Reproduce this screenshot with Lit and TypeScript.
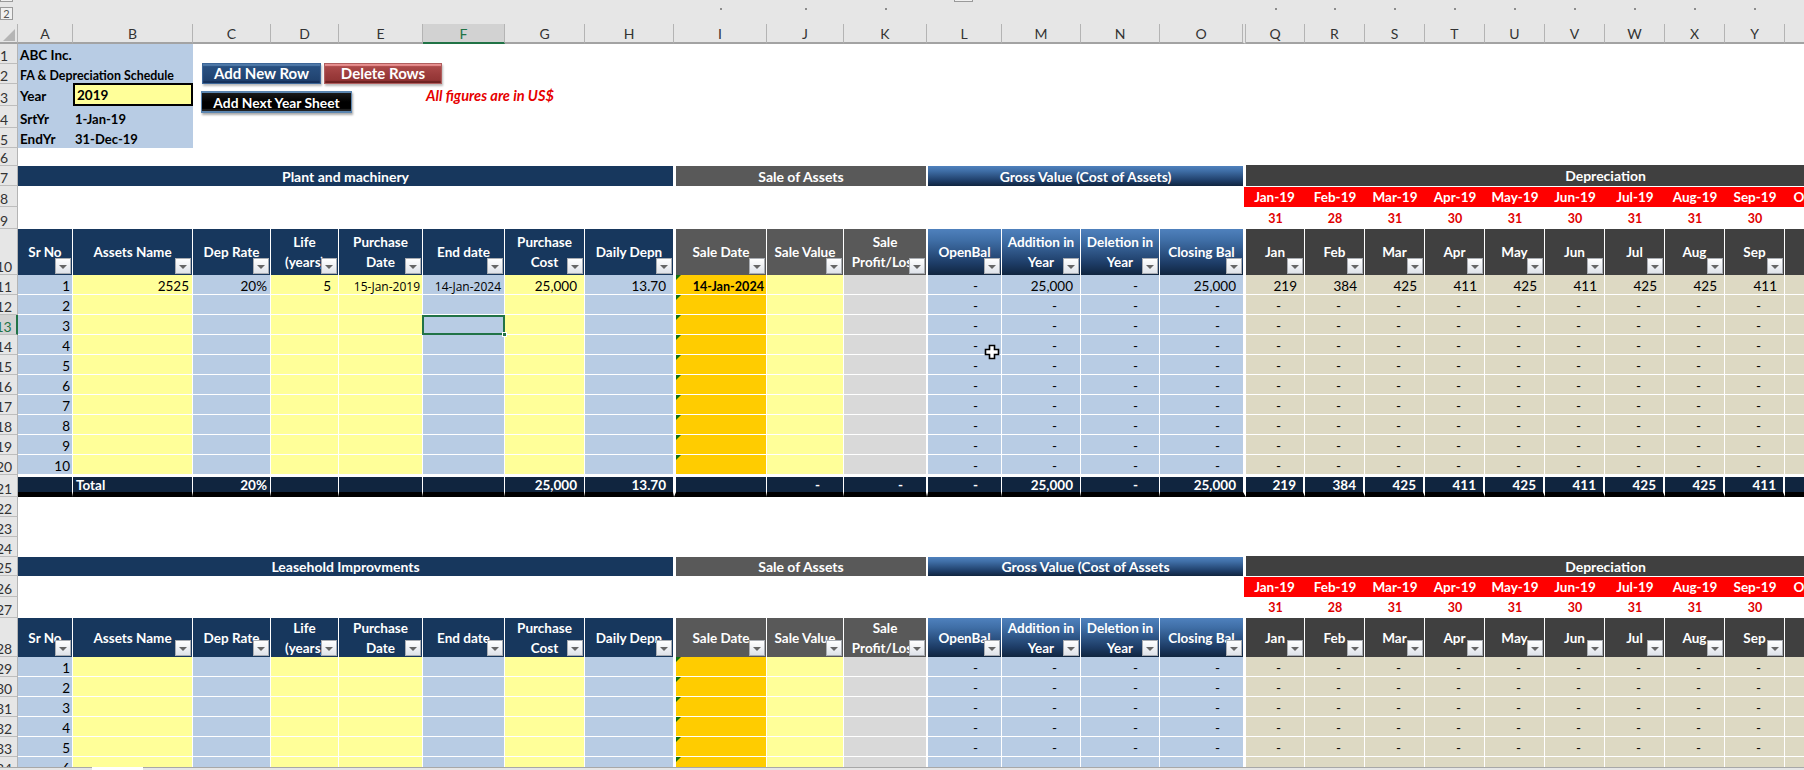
import { LitElement, html, css, nothing } from "lit";
import { customElement } from "lit/decorators.js";

const LETTERS = ["A","B","C","D","E","F","G","H","I","J","K","L","M","N","O","Q","R","S","T","U","V","W","X","Y","","",""];
const MONTHS = ["Jan","Feb","Mar","Apr","May","Jun","Jul","Aug","Sep","","",""];
const MONTH_ROW = ["Jan","Feb","Mar","Apr","May","Jun","Jul","Aug","Sep","Oct","",""];
const DAYS = [31,28,31,30,31,30,31,31,30];
const DEPN = [219,384,425,411,425,411,425,425,411];
const FILL = ["blue","yel","blue","yel","yel","blue","yel","blue","org","yel","gry","blue","blue","blue","blue",...Array(12).fill("tan")];
const EDGE: Record<number,string> = { 8: "lg", 11: "lb", 14: "rg" };
const PAD = ["p2","p3","p3","p7","p2","p3","p7","p7","p2","p7","p7","p7","p7","p7","p7",...Array(12).fill("p7")];
const DASH = ["d","d","d","d","d","d","d","d","d","d","d","d","d","dn","d",...Array(12).fill("d")];
const HEADS: string[][] = [
  ["Sr No"],["Assets Name"],["Dep Rate"],["Life","(years)"],["Purchase","Date"],["End date"],["Purchase","Cost"],["Daily Depn"],
  ["Sale Date"],["Sale Value"],["Sale","Profit/Loss"],["OpenBal"],["Addition in","Year"],["Deletion in","Year"],["Closing Bal"],
  ...MONTHS.map((m) => (m ? [m] : [])),
];
const dashes = (): Record<number,string> => {
  const o: Record<number,string> = {};
  for (const i of [11,12,13,14,...Array.from({length:9},(_, k) => 15 + k)]) o[i] = "-";
  return o;
};

@customElement("app-root")
export class AppRoot extends LitElement {
  static styles = css`
    :host { display: block; width: 1804px; height: 770px; overflow: hidden; background: #fff; font-family: Lato, "Liberation Sans", sans-serif; font-size: 13.5px; color: #000; }
    .wrap { position: relative; height: 767px; overflow: hidden; }
    .sheet {
      display: grid; width: 1965px;
      grid-template-columns: 18px 55px 120px 78px 68px 84px 82px 80px 89px 93px 77px 83px 75px 79px 79px 86px 59px repeat(11, 60px);
      grid-template-rows: 24px 20px 20px 20px 22px 22px 20px 18px 20px 21px 22px 46px repeat(10, 20px) 22px repeat(3, 20px) 19px 21px 21px 39px repeat(6, 20px);
    }
    .sheet > div { box-sizing: border-box; min-width: 0; }
    .out { background: #e6e6e6; display: flex; justify-content: center; }
    .outl { flex-direction: column; justify-content: flex-start; align-items: flex-start; gap: 5px; }
    .obox { box-sizing: border-box; width: 13px; background: #f0f0f0; border: 1px solid #9a9a9a; font-size: 11px; line-height: 12px; text-align: center; color: #555; }
    .ob1 { height: 2px; border-top: 0; }
    .ob2 { height: 13px; }
    .dot { width: 2px; height: 2px; background: #8c8c8c; margin-top: 8px; }
    .obtn { box-sizing: border-box; width: 19px; height: 2px; background: #f0f0f0; border: 1px solid #9a9a9a; border-top: 0; margin-left: -2px; }
    .chd { background: #e6e6e6; border-right: 1px solid #b4b4b4; border-bottom: 2px solid #a3a3a3; display: flex; align-items: center; justify-content: center; color: #333; font-size: 14px; }
    .chd.hid { border-right: 4px double #b4b4b4; }
    .chd.act { background: #d2d2d2; border-bottom: 2px solid #217346; color: #217346; }
    .corner { background: #e6e6e6; border-right: 1px solid #b4b4b4; border-bottom: 2px solid #a3a3a3; display: flex; align-items: flex-end; justify-content: center; padding-bottom: 1px; }
    .corner svg { display: block; }
    .rh { background: #e6e6e6; border-right: 1px solid #b4b4b4; border-bottom: 1px solid #bdbdbd; display: flex; align-items: flex-end; justify-content: center; padding-right: 9px; color: #333; font-size: 14px; line-height: 15px; overflow: hidden; }
    .rh.act { background: #d2d2d2; color: #217346; border-right: 2px solid #217346; }
    .c { display: flex; align-items: flex-end; white-space: nowrap; overflow: hidden; line-height: 15px; padding-bottom: 0; }
    .r { justify-content: flex-end; }
    .top { background: #b8cce4; font-weight: 700; padding-left: 2px; line-height: 17px; font-size: 13.5px; }
    .small { font-size: 12.4px; }
    .val { padding-left: 2px; font-size: 13px; }
    .yl { padding-bottom: 1px; }
    .yr { background: #ffff99; border: 2px solid #000; margin-top: -1px; padding: 2px 0 0 2px; align-items: center; font-weight: 700; }
    .note { overflow: visible; color: #e60000; font-style: italic; font-weight: 700; padding: 0 0 2px 3px; font-size: 14.6px; line-height: 17px; }
    .band { justify-content: center; align-items: center; color: #fff; font-weight: 700; padding: 0; font-size: 14px; line-height: 17px; }
    .navy { background: #17375d; }
    .grey { background: #595959; margin-left: 2px; }
    .grad { background: linear-gradient(#4f81bd, #3f6ea6 25%, #1d3c66 75%, #10253f); margin-left: 1px; }
    .dark { background: #404040; margin-top: -1px; }
    .band.navy { margin-right: 1px; }
    .band.grey { margin-right: 1px; }
    .band.grad { margin-right: 3px; }
    .red { background: #ff0000; color: #fff; font-weight: 700; justify-content: center; align-items: center; margin-top: 1px; padding: 1px 0 0; line-height: 17px; }
    .redl { margin-left: -2px; }
    .day { color: #e00000; font-weight: 700; font-size: 12.5px; justify-content: center; line-height: 17px; padding-bottom: 2px; }
    .h { position: relative; color: #fff; font-weight: 700; background: #17375d; display: flex; flex-direction: column; justify-content: center; align-items: center; text-align: center; line-height: 20px; border-right: 1px solid #fff; white-space: nowrap; overflow: hidden; }
    .h.g2 { background: #595959; }
    .h.g3 { background: linear-gradient(#4f81bd, #3f6ea6 25%, #1d3c66 75%, #10253f); }
    .h.g4 { background: #404040; }
    .flt { position: absolute; right: 1px; bottom: 1px; width: 16px; height: 16px; box-sizing: border-box; background: linear-gradient(#ffffff, #dfe3ea); border: 1px solid #a9adb3; }
    .flt::after { content: ""; position: absolute; left: 3px; top: 6px; border-left: 4px solid transparent; border-right: 4px solid transparent; border-top: 4px solid #666; }
    .cell { border-right: 1px solid #fff; border-bottom: 1px solid #fff; }
    .blue { background: #b8cce4; }
    .yel { background: #ffff99; }
    .org { background: #ffcc00; position: relative; }
    .org::before { content: ""; position: absolute; left: 0; top: 0; border-top: 5px solid #107010; border-right: 5px solid transparent; }
    .gry { background: #d9d9d9; }
    .tan { background: #ddd9c3; }
    .lg { border-left: 2px solid #fff; }
    .lb { border-left: 1px solid #fff; }
    .rg { border-right: 3px solid #fff; }
    .p2 { padding-right: 2px; }
    .p3 { padding-right: 3px; }
    .p7 { padding-right: 7px; }
    .d { padding-right: 23px; }
    .dn { padding-right: 21px; }
    .date { font-family: "Open Sans", Lato, sans-serif; font-size: 12px; }
    .boldd { font-weight: 700; font-size: 12.6px; }
    .sel { position: relative; overflow: visible; z-index: 1; }
    .sel::after { content: ""; position: absolute; inset: 0 -1px -1px -1px; border: 2px solid #217346; }
    .sel::before { content: ""; position: absolute; right: -3px; bottom: -3px; width: 5px; height: 5px; background: #217346; border: 1px solid #fff; box-sizing: border-box; z-index: 1; }
    .tot { background: #10253f; color: #fff; font-weight: 700; border-top: 2px solid #fff; border-right: 1px solid #fff; border-bottom: 5px solid #000; align-items: center; padding-top: 1px; }
    .tot.tq { border-right-width: 2px; }
    .tot.rg { border-right-width: 3px; }
    .shapes { position: absolute; left: 201px; top: 63px; display: flex; flex-direction: column; gap: 7px; }
    .brow { display: flex; gap: 3px; margin-left: 1px; }
    .btn { box-sizing: border-box; font: 700 15px Lato, sans-serif; color: #fff; padding: 0 0 2px; display: flex; align-items: center; justify-content: center; border-radius: 0; }
    .b1 { width: 119px; height: 21px; border: 1px solid #3c6698; background: linear-gradient(#2a5283, #254a79 50%, #1e3f6b); box-shadow: inset 0 2px 1px #4f79a8, inset 0 -2px 1px #15305a, 1px 2px 2px #bbb; }
    .b2 { width: 118px; height: 21px; border: 1px solid #b05e5e; background: linear-gradient(#b04e4e, #9c3c3c 55%, #8f3232); box-shadow: inset 0 2px 1px #e89090, inset 0 -2px 1px #6e2222, 1px 2px 2px #bbb; }
    .b3 { width: 151px; height: 22px; border: 1px solid #5c86b0; border-width: 2px 1px; background: linear-gradient(#1a1a1a, #000 50%); box-shadow: inset 0 -2px 1px #222, 1px 2px 2px #aaa; font-size: 13.8px; padding: 0; }
    .cursor { position: absolute; left: 984px; top: 344px; display: block; }
    .tabs { position: relative; height: 3px; background: #e6e6e6; border-top: 1px solid #a8a8a8; box-sizing: border-box; }
    .tab { position: absolute; left: 92px; top: -1px; width: 51px; height: 3px; background: #fff; }
  `;

  private blank(n: number) {
    return html`<div class="bk" style="grid-column: span ${n}"></div>`;
  }

  private rh(n: number, act = false) {
    return html`<div class="rh ${act ? "act" : ""}">${n}</div>`;
  }

  private band(label: string, cls: string, n: number) {
    return html`<div class="c band ${cls}" style="grid-column: span ${n}">${label}</div>`;
  }

  private sectionBands(title: string, gross: string) {
    return html`${this.band(title, "navy", 8)}${this.band("Sale of Assets", "grey", 3)}${this.band(gross, "grad", 4)}${this.band("Depreciation", "dark", 12)}`;
  }

  private monthRows(a: number) {
    return html`
      ${this.rh(a)}${this.blank(15)}
      ${MONTH_ROW.map((m, i) => html`<div class="c red ${i === 0 ? "redl" : ""}">${m ? `${m}-19` : nothing}</div>`)}
      ${this.rh(a + 1)}${this.blank(15)}
      ${DAYS.map((d) => html`<div class="c day">${d}</div>`)}${this.blank(3)}
    `;
  }

  private heads(n: number) {
    return html`${this.rh(n)}${HEADS.map((lines, i) => {
      const g = i < 8 ? "" : i < 11 ? "g2" : i < 15 ? "g3" : "g4";
      const e = EDGE[i] ?? "";
      return html`<div class="h ${g} ${e}">${lines.map((l) => html`<span>${l}</span>`)}<i class="flt"></i></div>`;
    })}`;
  }

  private dataRow(n: number, vals: Record<number, string>, opts: { act?: boolean; sel?: number; dateCols?: number[]; boldCol?: number } = {}) {
    return html`${this.rh(n, opts.act)}${FILL.map((f, i) => {
      const v = vals[i];
      const pad = v === "-" ? DASH[i] : PAD[i];
      const cls = [
        "c", "cell", "r", f, EDGE[i] ?? "", v ? pad : "",
        opts.sel === i ? "sel" : "",
        opts.dateCols?.includes(i) ? "date" : "",
        opts.boldCol === i ? "boldd" : "",
      ].join(" ");
      return html`<div class=${cls}>${v ?? nothing}</div>`;
    })}`;
  }

  private totalRow(n: number) {
    const vals: Record<number, string> = {
      2: "20%", 6: "25,000", 7: "13.70", 9: "-", 10: "-", 11: "-", 12: "25,000", 13: "-", 14: "25,000",
    };
    DEPN.forEach((d, i) => (vals[15 + i] = String(d)));
    return html`${this.rh(n)}${FILL.map((_, i) => {
      if (i === 1) return html`<div class="c tot" style="padding-left:3px">Total</div>`;
      const v = vals[i];
      const pad = v === "-" ? DASH[i] : PAD[i];
      const cls = ["c", "r", "tot", i === 14 ? "rg" : "", i === 8 ? "lg" : "", i === 11 ? "lb" : "", i >= 15 ? "tq" : "", v ? pad : ""].join(" ");
      return html`<div class=${cls}>${v ?? nothing}</div>`;
    })}`;
  }

  render() {
    const first: Record<number, string> = {
      ...dashes(), 0: "1", 1: "2525", 2: "20%", 3: "5", 4: "15-Jan-2019", 5: "14-Jan-2024", 6: "25,000", 7: "13.70", 8: "14-Jan-2024", 12: "25,000", 14: "25,000",
    };
    DEPN.forEach((d, i) => (first[15 + i] = String(d)));
    const rows1 = Array.from({ length: 9 }, (_, k) => k + 2);
    const rows2 = Array.from({ length: 6 }, (_, k) => k + 1);
    return html`
      <div class="wrap">
        <div class="sheet">
          <div class="out outl"><div class="obox ob1"></div><div class="obox ob2">2</div></div>
          ${LETTERS.map((l, i) =>
            html`<div class="out">${(i >= 8 && i <= 10) || (i >= 15 && i < 24) ? html`<i class="dot"></i>` : i === 11 ? html`<i class="obtn"></i>` : nothing}</div>`)}

          <div class="corner"><svg width="12" height="12" viewBox="0 0 12 12"><path d="M12 0V12H0Z" fill="#b5b5b5"/></svg></div>
          ${LETTERS.map((l, i) => html`<div class="chd ${i === 5 ? "act" : ""} ${i === 14 ? "hid" : ""}">${l}</div>`)}

          ${this.rh(1)}<div class="c top" style="grid-column: span 2">ABC Inc.</div>${this.blank(25)}
          ${this.rh(2)}<div class="c top small" style="grid-column: span 2">FA &amp; Depreciation Schedule</div>${this.blank(25)}
          ${this.rh(3)}<div class="c top yl">Year</div><div class="c yr">2019</div>${this.blank(3)}<div class="c note">All figures are in US$</div>${this.blank(21)}
          ${this.rh(4)}<div class="c top">SrtYr</div><div class="c top val">1-Jan-19</div>${this.blank(25)}
          ${this.rh(5)}<div class="c top">EndYr</div><div class="c top val">31-Dec-19</div>${this.blank(25)}
          ${this.rh(6)}${this.blank(27)}

          ${this.rh(7)}${this.sectionBands("Plant and machinery", "Gross Value (Cost of Assets)")}
          ${this.monthRows(8)}
          ${this.heads(10)}
          ${this.dataRow(11, first, { dateCols: [4, 5], boldCol: 8 })}
          ${rows1.map((n) =>
            this.dataRow(n + 10, { ...dashes(), 0: String(n) }, { act: n === 3, sel: n === 3 ? 5 : undefined }))}
          ${this.totalRow(21)}
          ${this.rh(22)}${this.blank(27)}
          ${this.rh(23)}${this.blank(27)}
          ${this.rh(24)}${this.blank(27)}

          ${this.rh(25)}${this.sectionBands("Leasehold Improvments", "Gross Value (Cost of Assets")}
          ${this.monthRows(26)}
          ${this.heads(28)}
          ${rows2.map((n) => this.dataRow(n + 28, { ...dashes(), 0: String(n) }))}
        </div>

        <div class="shapes">
          <div class="brow">
            <button class="btn b1">Add New Row</button>
            <button class="btn b2">Delete Rows</button>
          </div>
          <button class="btn b3">Add Next Year Sheet</button>
        </div>

        <svg class="cursor" width="16" height="16" viewBox="0 0 16 16">
          <path d="M5.5 1.5H10.5V5.5H14.5V10.5H10.5V14.5H5.5V10.5H1.5V5.5H5.5Z" fill="#fff" stroke="#000" stroke-width="1.6"/>
        </svg>
      </div>
      <div class="tabs"><div class="tab"></div></div>
    `;
  }
}
